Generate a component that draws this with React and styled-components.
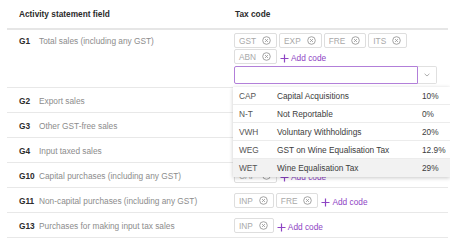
import React from "react";
import styled, { createGlobalStyle } from "styled-components";

const GlobalStyle = createGlobalStyle`
  html, body {
    margin: 0;
    padding: 0;
    background: #ffffff;
  }
  body {
    font-family: "Liberation Sans", Arial, sans-serif;
    font-size: 8.3px;
    color: #333;
  }
`;

const rows = [
  { code: "G1", label: "Total sales (including any GST)", tags: ["GST", "EXP", "FRE", "ITS", "ABN"], open: true },
  { code: "G2", label: "Export sales", tags: ["EXP"] },
  { code: "G3", label: "Other GST-free sales", tags: ["FRE"] },
  { code: "G4", label: "Input taxed sales", tags: ["INP"] },
  { code: "G10", label: "Capital purchases (including any GST)", tags: ["CAP"] },
  { code: "G11", label: "Non-capital purchases (including any GST)", tags: ["INP", "FRE"] },
  { code: "G13", label: "Purchases for making input tax sales", tags: ["INP"] },
];

const options = [
  { code: "CAP", name: "Capital Acquisitions", rate: "10%" },
  { code: "N-T", name: "Not Reportable", rate: "0%" },
  { code: "VWH", name: "Voluntary Withholdings", rate: "20%" },
  { code: "WEG", name: "GST on Wine Equalisation Tax", rate: "12.9%" },
  { code: "WET", name: "Wine Equalisation Tax", rate: "29%", active: true },
];

function RemoveIcon() {
  return (
    <svg width="9" height="9" viewBox="0 0 9 9">
      <circle cx="4.5" cy="4.5" r="3.8" fill="none" stroke="#9a9a9a" strokeWidth="0.9" />
      <path d="M3.1 3.1 L5.9 5.9 M5.9 3.1 L3.1 5.9" stroke="#9a9a9a" strokeWidth="0.9" />
    </svg>
  );
}

function PlusIcon() {
  return (
    <svg width="9" height="9" viewBox="0 0 9 9">
      <path d="M4.5 0.5 V8.5 M0.5 4.5 H8.5" stroke="#8e44c4" strokeWidth="1.2" />
    </svg>
  );
}

function Chevron() {
  return (
    <svg width="6" height="4" viewBox="0 0 6 4">
      <path d="M0.6 0.8 L3 3 L5.4 0.8" fill="none" stroke="#999" strokeWidth="0.8" />
    </svg>
  );
}

function App() {
  return (
    <>
      <GlobalStyle />
      <Page>
        <HeaderRow>
          <HeadCell>Activity statement field</HeadCell>
          <HeadCell>Tax code</HeadCell>
        </HeaderRow>
        {rows.map((row) => (
          <Row key={row.code} $open={row.open}>
            <FieldCell>
              <Code>{row.code}</Code>
              <Label>{row.label}</Label>
            </FieldCell>
            <CodeCell>
              <Tags>
                {row.tags.map((t) => (
                  <Tag key={t}>
                    {t}
                    <RemoveIcon />
                  </Tag>
                ))}
                <AddCode>
                  <PlusIcon />
                  Add code
                </AddCode>
              </Tags>
              {row.open && (
                <Picker>
                  <SearchInput />
                  <ToggleButton>
                    <Chevron />
                  </ToggleButton>
                  <Menu>
                    {options.map((o) => (
                      <Option key={o.code} $active={o.active}>
                        <OptCode>{o.code}</OptCode>
                        <OptName>{o.name}</OptName>
                        <OptRate>{o.rate}</OptRate>
                      </Option>
                    ))}
                  </Menu>
                </Picker>
              )}
            </CodeCell>
          </Row>
        ))}
      </Page>
    </>
  );
}

export default App;

const Page = styled.div`
  padding: 0 2px 0 7px;
  width: 441px;
`;

const HeaderRow = styled.div`
  display: grid;
  grid-template-columns: 227px 1fr;
  height: 28px;
  align-items: center;
  border-bottom: 2px solid #e6e6e6;
`;

const HeadCell = styled.div`
  font-weight: bold;
  color: #2b2b2b;
  padding-left: 12px;

  &:last-child {
    padding-left: 1px;
  }
`;

const Row = styled.div`
  display: grid;
  grid-template-columns: 227px 203px;
  padding: ${(p) => (p.$open ? "3px 0 3px" : "5px 0 4px")};
  border-bottom: 1px solid #e8e8e8;
`;

const FieldCell = styled.div`
  display: flex;
  align-items: center;
  height: 15px;
  padding-left: 12px;
`;

const Code = styled.span`
  font-weight: bold;
  color: #2b2b2b;
  min-width: 16px;
  margin-right: 4px;
  white-space: nowrap;
`;

const Label = styled.span`
  color: #8c8c8c;
  white-space: nowrap;
`;

const CodeCell = styled.div`
  display: flex;
  flex-direction: column;
  gap: 2px;
`;

const Tags = styled.div`
  display: flex;
  flex-wrap: wrap;
  gap: 1px 2px;
  align-items: center;
`;

const Tag = styled.span`
  display: inline-flex;
  align-items: center;
  gap: 6px;
  height: 15px;
  box-sizing: border-box;
  padding: 0 5px 0 4px;
  border: 1px solid #dedede;
  border-radius: 2px;
  color: #a8a8a8;
`;

const AddCode = styled.span`
  display: inline-flex;
  align-items: center;
  gap: 2px;
  height: 15px;
  box-sizing: border-box;
  padding-top: 3px;
  margin-left: 1px;
  color: #8e44c4;
`;

const Picker = styled.div`
  position: relative;
  display: flex;
  height: 18px;
`;

const SearchInput = styled.div`
  flex: 1;
  box-sizing: border-box;
  border: 1px solid #b27fd9;
  border-radius: 2px 0 0 2px;
  background: #fff;
`;

const ToggleButton = styled.div`
  width: 19px;
  box-sizing: border-box;
  display: flex;
  align-items: center;
  justify-content: center;
  border: 1px solid #e0e0e0;
  border-left: none;
  border-radius: 0 2px 2px 0;
`;

const Menu = styled.div`
  position: absolute;
  top: 21px;
  left: -1px;
  width: 217px;
  background: #fff;
  box-shadow: 0 1px 4px rgba(0, 0, 0, 0.22);
  z-index: 5;
`;

const Option = styled.div`
  display: grid;
  grid-template-columns: 38px 145px 1fr;
  align-items: center;
  height: 18px;
  box-sizing: border-box;
  padding-left: 6px;
  color: #3c3c3c;
  background: ${(p) => (p.$active ? "#f2f2f2" : "#fff")};
  border-bottom: 1px solid #ececec;

  &:last-child {
    border-bottom: none;
  }
`;

const OptCode = styled.span`
  color: #555;
`;

const OptName = styled.span`
  white-space: nowrap;
`;

const OptRate = styled.span`
  white-space: nowrap;
`;
